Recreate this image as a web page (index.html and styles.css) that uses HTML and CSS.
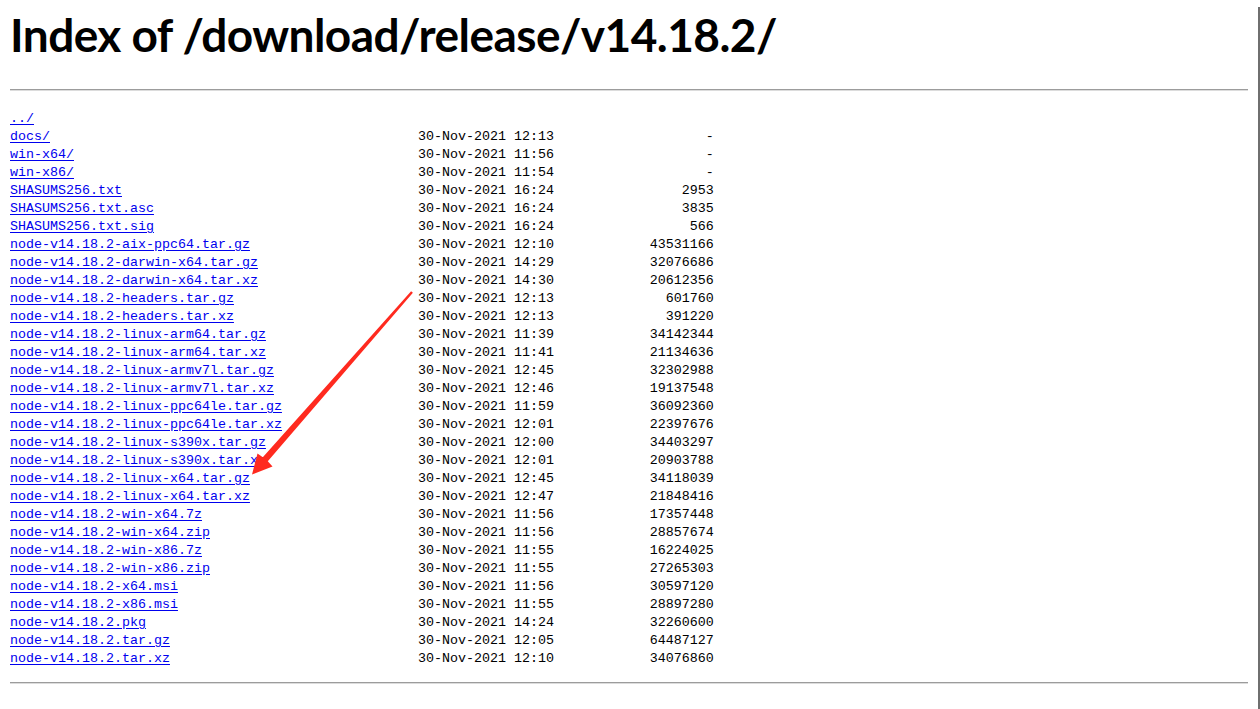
FILE: index.html
```html
<!DOCTYPE html>
<html lang="en">
<head>
<meta charset="utf-8">
<title>Index of /download/release/v14.18.2/</title>
<link rel="stylesheet" href="styles.css">
</head>
<body>
<div class="page">
  <h1 class="title">Index of /download/release/v14.18.2/</h1>
  <hr class="rule">
  <div class="listing">
    <a class="name up" href="#">../</a>
    <a class="name" href="#">docs/</a><span class="date">30-Nov-2021 12:13</span><span class="size">-</span>
    <a class="name" href="#">win-x64/</a><span class="date">30-Nov-2021 11:56</span><span class="size">-</span>
    <a class="name" href="#">win-x86/</a><span class="date">30-Nov-2021 11:54</span><span class="size">-</span>
    <a class="name" href="#">SHASUMS256.txt</a><span class="date">30-Nov-2021 16:24</span><span class="size">2953</span>
    <a class="name" href="#">SHASUMS256.txt.asc</a><span class="date">30-Nov-2021 16:24</span><span class="size">3835</span>
    <a class="name" href="#">SHASUMS256.txt.sig</a><span class="date">30-Nov-2021 16:24</span><span class="size">566</span>
    <a class="name" href="#">node-v14.18.2-aix-ppc64.tar.gz</a><span class="date">30-Nov-2021 12:10</span><span class="size">43531166</span>
    <a class="name" href="#">node-v14.18.2-darwin-x64.tar.gz</a><span class="date">30-Nov-2021 14:29</span><span class="size">32076686</span>
    <a class="name" href="#">node-v14.18.2-darwin-x64.tar.xz</a><span class="date">30-Nov-2021 14:30</span><span class="size">20612356</span>
    <a class="name" href="#">node-v14.18.2-headers.tar.gz</a><span class="date">30-Nov-2021 12:13</span><span class="size">601760</span>
    <a class="name" href="#">node-v14.18.2-headers.tar.xz</a><span class="date">30-Nov-2021 12:13</span><span class="size">391220</span>
    <a class="name" href="#">node-v14.18.2-linux-arm64.tar.gz</a><span class="date">30-Nov-2021 11:39</span><span class="size">34142344</span>
    <a class="name" href="#">node-v14.18.2-linux-arm64.tar.xz</a><span class="date">30-Nov-2021 11:41</span><span class="size">21134636</span>
    <a class="name" href="#">node-v14.18.2-linux-armv7l.tar.gz</a><span class="date">30-Nov-2021 12:45</span><span class="size">32302988</span>
    <a class="name" href="#">node-v14.18.2-linux-armv7l.tar.xz</a><span class="date">30-Nov-2021 12:46</span><span class="size">19137548</span>
    <a class="name" href="#">node-v14.18.2-linux-ppc64le.tar.gz</a><span class="date">30-Nov-2021 11:59</span><span class="size">36092360</span>
    <a class="name" href="#">node-v14.18.2-linux-ppc64le.tar.xz</a><span class="date">30-Nov-2021 12:01</span><span class="size">22397676</span>
    <a class="name" href="#">node-v14.18.2-linux-s390x.tar.gz</a><span class="date">30-Nov-2021 12:00</span><span class="size">34403297</span>
    <a class="name" href="#">node-v14.18.2-linux-s390x.tar.xz</a><span class="date">30-Nov-2021 12:01</span><span class="size">20903788</span>
    <a class="name" href="#">node-v14.18.2-linux-x64.tar.gz</a><span class="date">30-Nov-2021 12:45</span><span class="size">34118039</span>
    <a class="name" href="#">node-v14.18.2-linux-x64.tar.xz</a><span class="date">30-Nov-2021 12:47</span><span class="size">21848416</span>
    <a class="name" href="#">node-v14.18.2-win-x64.7z</a><span class="date">30-Nov-2021 11:56</span><span class="size">17357448</span>
    <a class="name" href="#">node-v14.18.2-win-x64.zip</a><span class="date">30-Nov-2021 11:56</span><span class="size">28857674</span>
    <a class="name" href="#">node-v14.18.2-win-x86.7z</a><span class="date">30-Nov-2021 11:55</span><span class="size">16224025</span>
    <a class="name" href="#">node-v14.18.2-win-x86.zip</a><span class="date">30-Nov-2021 11:55</span><span class="size">27265303</span>
    <a class="name" href="#">node-v14.18.2-x64.msi</a><span class="date">30-Nov-2021 11:56</span><span class="size">30597120</span>
    <a class="name" href="#">node-v14.18.2-x86.msi</a><span class="date">30-Nov-2021 11:55</span><span class="size">28897280</span>
    <a class="name" href="#">node-v14.18.2.pkg</a><span class="date">30-Nov-2021 14:24</span><span class="size">32260600</span>
    <a class="name" href="#">node-v14.18.2.tar.gz</a><span class="date">30-Nov-2021 12:05</span><span class="size">64487127</span>
    <a class="name" href="#">node-v14.18.2.tar.xz</a><span class="date">30-Nov-2021 12:10</span><span class="size">34076860</span>
  </div>
  <hr class="rule rule-bottom">
</div>
<svg class="annotation" width="1260" height="709" viewBox="0 0 1260 709" aria-hidden="true">
  <polygon fill="#ff2a1f" points="412.9,292.8 267.8,461.2 272.5,466.5 252,474.5 257.5,453.5 262.8,457.3 411.1,291.2"/>
</svg>
</body>
</html>
```

FILE: styles.css
```css
html, body {
  margin: 0;
  padding: 0;
  height: 100%;
  background: #ffffff;
}

body {
  position: relative;
  overflow: hidden;
}

.page {
  box-sizing: border-box;
  width: 1260px;
  height: 709px;
  padding: 0 10px;
  border-right: 2px solid #6f6f6f;
  border-bottom: 2px solid #6f6f6f;
  background: #ffffff;
  color: #000000;
}

.title {
  margin: 7px 0 0 0;
  font-family: "Lato", "Noto Sans", sans-serif;
  font-weight: 700;
  font-size: 46px;
  line-height: 56px;
  letter-spacing: -0.55px;
  white-space: nowrap;
}

.rule {
  margin: 26px 0 0 0;
  height: 0;
  border: none;
  border-top: 1px solid #9c9c9c;
  border-bottom: 1px solid #dcdcdc;
}

.rule-bottom {
  margin-top: 14px;
}

.listing {
  margin-top: 19px;
  display: grid;
  grid-template-columns: 51ch 17ch 20ch;
  justify-content: start;
  font-family: "Liberation Mono", "DejaVu Sans Mono", monospace;
  font-size: 13.33px;
  line-height: 18px;
  white-space: pre;
}

.name {
  grid-column: 1;
  justify-self: start;
  color: #0000ee;
  text-decoration: underline;
  text-underline-offset: 2px;
}

.up {
  grid-column: 1 / -1;
}

.date {
  grid-column: 2;
}

.size {
  grid-column: 3;
  text-align: right;
}

.annotation {
  position: absolute;
  left: 0;
  top: 0;
  pointer-events: none;
}
```
